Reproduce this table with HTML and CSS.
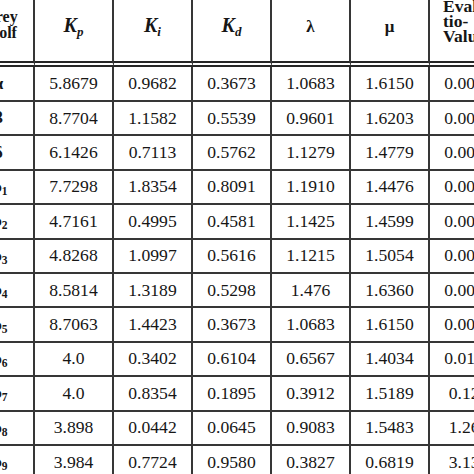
FILE: index.html
```html
<!DOCTYPE html>
<html>
<head>
<meta charset="utf-8">
<link rel="stylesheet" href="styles.css">
</head>
<body>
<div class="viewport">
<table class="grid">
<colgroup>
<col class="c-first"><col class="c"><col class="c"><col class="c"><col class="c"><col class="c"><col class="c">
</colgroup>
<thead>
<tr class="head">
<th class="txt wolf">Grey<br>Wolf</th>
<th class="sym"><span class="k">K<sub>p</sub></span></th>
<th class="sym"><span class="k">K<sub>i</sub></span></th>
<th class="sym"><span class="k">K<sub>d</sub></span></th>
<th class="sym"><span class="g">λ</span></th>
<th class="sym"><span class="g">μ</span></th>
<th class="txt eval">Evalua-<br>tio-<br>Value</th>
</tr>
</thead>
<tbody>
<tr class="first"><th>α</th><td>5.8679</td><td>0.9682</td><td>0.3673</td><td>1.0683</td><td>1.6150</td><td>0.0021</td></tr>
<tr><th>β</th><td>8.7704</td><td>1.1582</td><td>0.5539</td><td>0.9601</td><td>1.6203</td><td>0.0034</td></tr>
<tr><th>δ</th><td>6.1426</td><td>0.7113</td><td>0.5762</td><td>1.1279</td><td>1.4779</td><td>0.0042</td></tr>
<tr><th>ω<sub>1</sub></th><td>7.7298</td><td>1.8354</td><td>0.8091</td><td>1.1910</td><td>1.4476</td><td>0.0048</td></tr>
<tr><th>ω<sub>2</sub></th><td>4.7161</td><td>0.4995</td><td>0.4581</td><td>1.1425</td><td>1.4599</td><td>0.0053</td></tr>
<tr><th>ω<sub>3</sub></th><td>4.8268</td><td>1.0997</td><td>0.5616</td><td>1.1215</td><td>1.5054</td><td>0.0061</td></tr>
<tr><th>ω<sub>4</sub></th><td>8.5814</td><td>1.3189</td><td>0.5298</td><td>1.476</td><td>1.6360</td><td>0.0072</td></tr>
<tr><th>ω<sub>5</sub></th><td>8.7063</td><td>1.4423</td><td>0.3673</td><td>1.0683</td><td>1.6150</td><td>0.0021</td></tr>
<tr><th>ω<sub>6</sub></th><td>4.0</td><td>0.3402</td><td>0.6104</td><td>0.6567</td><td>1.4034</td><td>0.0135</td></tr>
<tr><th>ω<sub>7</sub></th><td>4.0</td><td>0.8354</td><td>0.1895</td><td>0.3912</td><td>1.5189</td><td>0.123</td></tr>
<tr><th>ω<sub>8</sub></th><td>3.898</td><td>0.0442</td><td>0.0645</td><td>0.9083</td><td>1.5483</td><td>1.264</td></tr>
<tr><th>ω<sub>9</sub></th><td>3.984</td><td>0.7724</td><td>0.9580</td><td>0.3827</td><td>0.6819</td><td>3.132</td></tr>
</tbody>
</table>
</div>
</body>
</html>
```
FILE: styles.css
```css
html, body {
  margin: 0;
  padding: 0;
  background: #ffffff;
}

.viewport {
  width: 474px;
  height: 474px;
  overflow: hidden;
  background: #ffffff;
}

.grid {
  table-layout: fixed;
  border-collapse: separate;
  border-spacing: 0;
  width: 541px;
  margin: -14px 0 0 -32px;
  font-family: "Liberation Serif", "Times New Roman", serif;
  color: #161616;
}

.c-first { width: 67px; }
.c { width: 79px; }

.grid th,
.grid td {
  padding: 0;
  text-align: center;
  vertical-align: middle;
  border-right: 2px solid #363636;
  border-bottom: 2px solid #363636;
  white-space: nowrap;
  overflow: hidden;
}

.grid td {
  font-size: 17.6px;
  font-weight: normal;
}

.grid tbody th {
  font-size: 17px;
  font-weight: bold;
  padding-right: 4px;
}

.grid tbody th sub {
  font-size: 11.5px;
  vertical-align: -3px;
}

.head {
  height: 81px;
}

.head th {
  border-bottom: 6px double #262626;
}

.grid tbody tr {
  height: 34.4px;
}

.grid tbody tr.first {
  height: 35px;
}

.txt {
  font-size: 16px;
  font-weight: bold;
  line-height: 15.5px;
}

.grid th.wolf {
  padding-top: 2px;
}

.grid th.eval {
  text-align: left;
  padding-left: 13px;
  padding-bottom: 4px;
  font-size: 17.5px;
  line-height: 15px;
}

.grid th.sym {
  padding-top: 6px;
}

.k {
  font-size: 20px;
  font-weight: bold;
  font-style: italic;
}

.k sub {
  font-size: 13px;
  vertical-align: -4px;
}

.g {
  font-size: 17px;
  font-weight: bold;
}
```
